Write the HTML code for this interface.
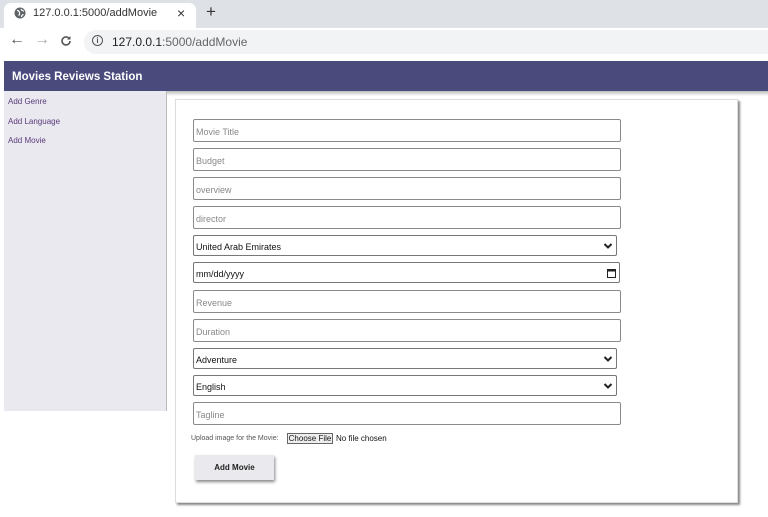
<!DOCTYPE html>
<html><head><style>
*{box-sizing:border-box;margin:0;padding:0}
body{width:768px;height:517px;overflow:hidden;background:#fff;font-family:"Liberation Sans",sans-serif;position:relative}
.abs{position:absolute}
.in{position:absolute;left:193px;width:428px;height:23px;border:1px solid #8a8a8a;border-radius:2px;font-size:9px;color:#888;padding:7px 2px 0}
.sel{position:absolute;left:193px;width:424px;height:21px;border:1px solid #777;border-radius:2px;font-size:9px;color:#111;padding:6px 2px 0}
.sel svg{position:absolute;right:3px;top:6px}
</style></head><body>
<div class="abs" style="left:0;top:0;width:768px;height:28px;background:#dee1e6"></div>
<div class="abs" style="left:4px;top:3px;width:192px;height:25px;background:#fff;border-radius:7px 7px 0 0"></div>
<svg class="abs" style="left:14px;top:7px" width="12" height="12" viewBox="0 0 12 12"><circle cx="6" cy="6" r="5.5" fill="#5f6368"/><path d="M3 3.5q2 0 2.5 2t-1 3M7 2q1 2 3 2M7.5 10q0-2 2-2.5" stroke="#fff" stroke-width="1.2" fill="none"/></svg>
<div class="abs" style="left:33px;top:7px;font-size:11px;color:#333">127.0.0.1:5000/addMovie</div>
<div class="abs" style="left:177px;top:5px;font-size:14px;color:#333">×</div>
<div class="abs" style="left:206px;top:2px;font-size:17px;color:#333">+</div>
<div class="abs" style="left:0;top:28px;width:768px;height:28px;background:#fff"></div>
<div class="abs" style="left:9px;top:31px;font-size:16px;color:#555">←</div>
<div class="abs" style="left:34px;top:31px;font-size:16px;color:#aaa">→</div>
<svg class="abs" style="left:60px;top:35px" width="12" height="12" viewBox="0 0 12 12"><path d="M10 6a4 4 0 1 1-1.2-2.9" stroke="#555" stroke-width="1.6" fill="none"/><path d="M10.5 1v3.5H7z" fill="#555"/></svg>
<div class="abs" style="left:84px;top:30px;width:684px;height:24px;background:#f1f3f4;border-radius:12px 0 0 12px"></div>
<div class="abs" style="left:92px;top:35px;width:11px;height:11px;border:1.3px solid #555;border-radius:50%;font-size:8px;text-align:center;line-height:9px;color:#555;font-weight:bold">i</div>
<div class="abs" style="left:112px;top:35px;font-size:12px;color:#222">127.0.0.1<span style="color:#666">:5000/addMovie</span></div>
<div class="abs" style="left:4px;top:61px;width:764px;height:30px;background:#4a4a7d;color:#fff;font-weight:bold;font-size:11.5px;padding:10px 8px">Movies Reviews Station</div>
<div class="abs" style="left:4px;top:91px;width:163px;height:320px;background:#e9e9ef;border-right:1px solid #bbb"></div>
<div class="abs" style="left:8px;top:97px;font-size:8px;color:#5a3a7a">Add Genre</div>
<div class="abs" style="left:8px;top:117px;font-size:8px;color:#5a3a7a">Add Language</div>
<div class="abs" style="left:8px;top:136px;font-size:8px;color:#5a3a7a">Add Movie</div>
<div class="abs" style="left:167px;top:91px;width:601px;height:5px;background:linear-gradient(#bbb,#fff)"></div>
<div class="abs" style="left:175px;top:99px;width:563px;height:404px;background:#fff;border:1px solid #ddd;box-shadow:2px 2px 2px #888"></div>
<div class="in" style="top:119px">Movie Title</div>
<div class="in" style="top:148px">Budget</div>
<div class="in" style="top:177px">overview</div>
<div class="in" style="top:206px">director</div>
<div class="sel" style="top:235px">United Arab Emirates<svg width="10" height="8" viewBox="0 0 10 8"><path d="M1.5 2l3.5 3.5 3.5-3.5" stroke="#222" stroke-width="2" fill="none"/></svg></div>
<div class="sel" style="top:262px;width:427px">mm/dd/yyyy<svg width="9" height="9" viewBox="0 0 9 9"><rect x="0.5" y="0.5" width="8" height="8" fill="none" stroke="#222"/><rect x="0.5" y="0.5" width="8" height="2" fill="#222"/></svg></div>
<div class="in" style="top:290px">Revenue</div>
<div class="in" style="top:319px">Duration</div>
<div class="sel" style="top:348px">Adventure<svg width="10" height="8" viewBox="0 0 10 8"><path d="M1.5 2l3.5 3.5 3.5-3.5" stroke="#222" stroke-width="2" fill="none"/></svg></div>
<div class="sel" style="top:375px">English<svg width="10" height="8" viewBox="0 0 10 8"><path d="M1.5 2l3.5 3.5 3.5-3.5" stroke="#222" stroke-width="2" fill="none"/></svg></div>
<div class="in" style="top:402px">Tagline</div>
<div class="abs" style="left:191px;top:435px;font-size:7px;color:#555">Upload image for the Movie:</div>
<div class="abs" style="left:287px;top:433px;width:46px;height:11px;border:1px solid #666;background:#eee;font-size:8px;text-align:center;line-height:9px;color:#111">Choose File</div>
<div class="abs" style="left:336px;top:434px;font-size:8px;color:#111">No file chosen</div>
<div class="abs" style="left:195px;top:455px;width:79px;height:25px;background:#e9e9ee;box-shadow:1px 2px 3px #888;font-size:8px;font-weight:bold;text-align:center;line-height:25px;color:#222">Add Movie</div>
</body></html>
